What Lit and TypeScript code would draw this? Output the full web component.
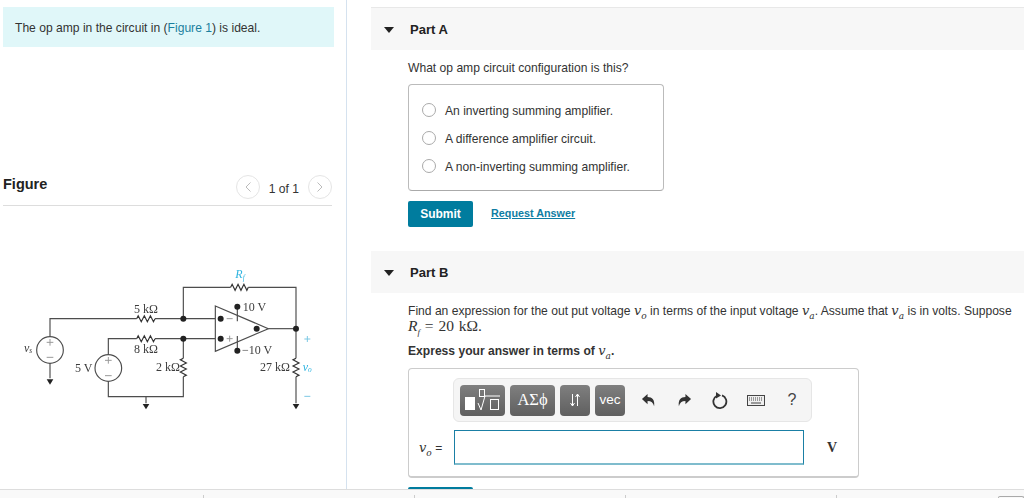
import { LitElement, css, html, svg } from "lit";
import { customElement } from "lit/decorators.js";

const zig = (x: number, y: number, w: number) => {
  const step = w / 6;
  let d = `M${x} ${y}`;
  for (let i = 0; i < 6; i++) {
    d += ` L${x + step * (i + 0.5)} ${y + (i % 2 ? 9 : -9)}`;
  }
  return `${d} L${x + w} ${y}`;
};

const zigV = (x: number, y: number, h: number) => {
  const step = h / 6;
  let d = `M${x} ${y}`;
  for (let i = 0; i < 6; i++) {
    d += ` L${x + (i % 2 ? 9 : -9)} ${y + step * (i + 0.5)}`;
  }
  return `${d} L${x} ${y + h}`;
};

const wires = [
  "M150 260V206H410",
  "M465 206H645",
  "M150 340V385",
  "M325 314V266H410",
  "M465 266H645",
  "M550 206V112H692",
  "M745 112H888V325",
  "M888 380V460",
  "M805 236H888",
  "M550 266V325",
  "M550 380V440H325V394",
  "M438 440V460",
  "M712 172V214",
  "M712 258V302",
];
const dots = [
  [550, 206], [550, 266], [662, 206], [662, 266], [770, 236],
  [888, 236], [712, 170], [712, 302],
];
const grounds = [[150, 388], [438, 462], [888, 462]];

const circuit = svg`
  <g fill="none" stroke="#4d4d4d" stroke-width="3.5">
    ${wires.map((d) => svg`<path d=${d} />`)}
    <path d="M646 168L805 236L646 304Z" />
    <circle cx="150" cy="300" r="40" />
    <circle cx="325" cy="354" r="40" />
  </g>
  <g fill="none" stroke="#333" stroke-width="3.5">
    <path d=${zig(410, 206, 55)} />
    <path d=${zig(410, 266, 55)} />
    <path d=${zig(692, 112, 53)} />
    <path d=${zigV(550, 325, 55)} />
    <path d=${zigV(888, 325, 55)} />
  </g>
  <g fill="#222">
    ${dots.map(([x, y]) => svg`<circle cx=${x} cy=${y} r="9" />`)}
    ${grounds.map(([x, y]) => svg`<path d="M${x - 10} ${y}H${x + 10}L${x} ${y + 16}Z" />`)}
  </g>
  <g stroke="#999" stroke-width="3" fill="none">
    <path d="M140 277H160M150 267V287M140 322H160" />
    <path d="M315 331H335M325 321V341M315 377H335" />
    <path d="M680 206H698M680 266H698M689 257V275" />
  </g>
  <g stroke="#7cc8e4" stroke-width="3" fill="none">
    <path d="M913 267H931M922 258V276M913 439H931" />
  </g>
  <g class="ctext">
    <text x="402" y="188">5 kΩ</text>
    <text x="402" y="310">8 kΩ</text>
    <text x="728" y="184">10 V</text>
    <text x="726" y="313">−10 V</text>
    <text x="225" y="365">5 V</text>
    <text x="468" y="362">2 kΩ</text>
    <text x="780" y="362">27 kΩ</text>
    <text x="72" y="305" class="it">v</text>
    <text x="88" y="310" class="sub">s</text>
  </g>
  <g class="ctext blue">
    <text x="706" y="84" class="it">R</text>
    <text x="728" y="90" class="sub">f</text>
    <text x="908" y="362" class="it">v</text>
    <text x="924" y="367" class="sub">o</text>
  </g>
`;

const replyPath = "M1 6.5L7 1V4.2C12 4.2 15 7.5 14 14C13 10.5 11 8.6 7 8.6V12Z";

@customElement("app-root")
export class AppRoot extends LitElement {
  static styles = css`
    :host {
      display: flex;
      flex-direction: column;
      width: 1024px;
      height: 498px;
      overflow: hidden;
      background: #fff;
      color: #333;
      font: 12.1px/14px "Liberation Sans", Arial, sans-serif;
    }

    .main {
      display: flex;
      height: 489px;
      overflow: hidden;
    }

    .left {
      flex: none;
      width: 346px;
      padding-top: 7px;
      border-right: 1px solid #d5e2ef;
    }

    .intro {
      display: flex;
      align-items: center;
      height: 40px;
      margin: 0 12px 0 3px;
      padding: 2px 12px 0;
      background: #e0f7f9;
      box-sizing: border-box;
    }

    a {
      color: #1a7f9e;
      text-decoration: none;
    }

    .fig-head {
      display: flex;
      align-items: center;
      justify-content: space-between;
      height: 31px;
      margin: 128px 14px 0 3px;
      border-bottom: 1px solid #ddd;
      box-sizing: border-box;
    }

    .fig-head h2 {
      margin: 0 0 13px;
      font-size: 14.5px;
      line-height: 18px;
      color: #222;
    }

    .pager {
      display: flex;
      align-items: center;
      gap: 9px;
      margin-bottom: 6px;
    }

    .pager span {
      display: flex;
      align-items: center;
      justify-content: center;
      width: 24px;
      height: 24px;
      border: 1px solid #e5e5e5;
      border-radius: 50%;
      box-sizing: border-box;
    }

    .count {
      padding-top: 3px;
    }

    .figure {
      display: block;
      margin-top: 44px;
      filter: blur(0.35px);
    }

    .ctext text {
      font: 36px "Liberation Serif", serif;
      fill: #3d3d3d;
    }

    .ctext.blue text {
      fill: #2fb4e0;
    }

    .ctext .it {
      font-style: italic;
    }

    .ctext .sub {
      font-size: 22px;
      font-style: italic;
    }

    .right {
      flex: 1;
      min-width: 0;
      margin-left: 24px;
      padding-top: 7px;
    }

    .part-head {
      display: flex;
      align-items: center;
      height: 42px;
      padding: 1px 0 0 13px;
      background: #f7f7f7;
      box-sizing: border-box;
      font-size: 13px;
      font-weight: bold;
      color: #222;
    }

    .part-a {
      height: 43px;
      border-top: 1px solid #e8e8e8;
    }

    .part-head svg {
      margin-right: 16px;
    }

    .part-b {
      margin-top: 24px;
    }

    .body {
      padding-left: 37px;
    }

    .question {
      margin: 11px 0 8px;
      line-height: 15px;
    }

    .choices {
      width: 256px;
      height: 107px;
      padding: 11px 0 0 13px;
      border: 1px solid #bbb;
      border-bottom-color: #aaa;
      border-radius: 4px;
      box-sizing: border-box;
    }

    .choice {
      display: flex;
      align-items: center;
      gap: 9px;
      height: 28px;
    }

    .choice-label {
      padding-top: 1px;
    }

    .radio {
      width: 14px;
      height: 14px;
      border: 1px solid #aaa;
      border-radius: 50%;
      box-sizing: border-box;
    }

    .actions {
      display: flex;
      align-items: center;
      gap: 18px;
      margin-top: 10px;
    }

    .submit {
      width: 65px;
      height: 26px;
      border-radius: 2px;
      background: #007c9e;
      color: #fff;
      font-size: 12px;
      font-weight: bold;
      text-align: center;
      line-height: 26px;
    }

    .request {
      margin-bottom: 2px;
      font-size: 10.8px;
      font-weight: bold;
      color: #0f7da3;
      text-decoration: underline;
    }

    .find {
      height: 28px;
      margin-top: 11px;
    }

    .v {
      font-family: "DejaVu Serif", serif;
      font-size: 13px;
      font-style: italic;
      font-weight: normal;
    }

    .v sub,
    .eq sub {
      font-size: 9px;
      line-height: 0;
    }

    .eq {
      display: inline-block;
      padding-top: 1px;
      font-family: "Liberation Serif", serif;
      font-size: 15.5px;
      line-height: 13px;
      word-spacing: 1px;
    }

    .express {
      height: 14px;
      margin-top: 12px;
      font-weight: bold;
    }

    .answer {
      width: 451px;
      height: 110px;
      margin-top: 10px;
      padding: 9px 0 0 44px;
      border: 1px solid #ccc;
      border-bottom: 2px solid #ccc;
      border-radius: 4px;
      box-sizing: border-box;
    }

    .toolbar {
      display: flex;
      align-items: center;
      width: 359px;
      height: 44px;
      padding-left: 6px;
      border: 1px solid #e6e6e6;
      border-radius: 6px;
      background: #f5f5f5;
      box-sizing: border-box;
    }

    .tbtn {
      display: flex;
      flex: none;
      align-items: center;
      justify-content: center;
      height: 31px;
      margin-right: 5px;
      border-radius: 4px;
      background: linear-gradient(#7f7f7f, #5f5f5f);
      color: #fff;
      box-sizing: border-box;
    }

    .w45 {
      width: 45px;
    }

    .w30 {
      width: 30px;
    }

    .greek {
      font: 16.5px "Liberation Serif", serif;
    }

    .vec {
      font-size: 13.5px;
    }

    .tool {
      display: flex;
      flex: none;
      align-items: center;
      justify-content: center;
      width: 36px;
      height: 31px;
      color: #444;
      font-size: 16px;
    }

    .answer-row {
      display: flex;
      align-items: center;
      margin: 8px 0 0 -44px;
      height: 35px;
    }

    .var {
      width: 45px;
      padding-left: 10px;
      box-sizing: border-box;
      white-space: nowrap;
    }

    .input {
      width: 350px;
      height: 35px;
      border: 1px solid #1a7fa5;
      border-bottom: 2px solid #7fbccd;
      box-sizing: border-box;
    }

    .unit {
      margin-left: 23px;
      font: bold 14px "Liberation Serif", serif;
    }

    .peek {
      width: 65px;
      height: 8px;
      margin-top: 9px;
      border-radius: 2px 2px 0 0;
      background: #007c9e;
    }

    .footer {
      display: grid;
      grid-template-columns: 204px 211px 211px 211px 161px 26px;
      height: 9px;
      border-top: 1px solid #ddd;
      background: #f9f9f9;
      box-sizing: border-box;
    }

    .footer div {
      margin-top: 5px;
      border-right: 1px solid #ccc;
    }

    .footer .end {
      margin-top: 6px;
      border: 1px solid #aaa;
      border-bottom: none;
      border-radius: 3px 3px 0 0;
    }
  `;

  render() {
    return html`
      <div class="main">
        <div class="left">
          <div class="intro">
            <span>The op amp in the circuit in (<a href="#">Figure 1</a>) is ideal.</span>
          </div>
          <div class="fig-head">
            <h2>Figure</h2>
            <div class="pager">
              <span>
                <svg width="8" height="12" viewBox="0 0 8 12" fill="none" stroke="#bbb">
                  <path d="M6.5 1.5L2 6l4.5 4.5" />
                </svg>
              </span>
              <div class="count">1 of 1</div>
              <span>
                <svg width="8" height="12" viewBox="0 0 8 12" fill="none" stroke="#bbb">
                  <path d="M1.5 1.5L6 6l-4.5 4.5" />
                </svg>
              </span>
            </div>
          </div>
          <svg class="figure" width="340" height="180" viewBox="0 0 1020 540">${circuit}</svg>
        </div>
        <div class="right">
          <div class="part-head part-a">
            <svg width="10" height="6" viewBox="0 0 10 6"><path d="M0 0H10L5 6Z" fill="#222" /></svg>
            Part A
          </div>
          <div class="body">
            <div class="question">What op amp circuit configuration is this?</div>
            <div class="choices">
              ${[
                "An inverting summing amplifier.",
                "A difference amplifier circuit.",
                "A non-inverting summing amplifier.",
              ].map(
                (c) => html`<div class="choice">
                  <span class="radio"></span><span class="choice-label">${c}</span>
                </div>`,
              )}
            </div>
            <div class="actions">
              <div class="submit">Submit</div>
              <a class="request" href="#">Request Answer</a>
            </div>
          </div>
          <div class="part-head part-b">
            <svg width="10" height="6" viewBox="0 0 10 6"><path d="M0 0H10L5 6Z" fill="#222" /></svg>
            Part B
          </div>
          <div class="body">
            <div class="find">
              Find an expression for the out put voltage
              <span class="v">v<sub>o</sub></span>
              in terms of the input voltage
              <span class="v">v<sub>a</sub></span>. Assume that
              <span class="v">v<sub>a</sub></span>
              is in volts. Suppose<br />
              <span class="eq"><i>R</i><sub><i>f</i></sub> = 20 kΩ.</span>
            </div>
            <div class="express">
              Express your answer in terms of
              <span class="v">v<sub>a</sub></span>.
            </div>
            <div class="answer">
              <div class="toolbar">
                <div class="tbtn w45">
                  <svg width="40" height="24" viewBox="0 0 40 24" fill="none" stroke="#fff">
                    <rect x="2" y="9" width="10" height="13" fill="#fff" stroke="none" />
                    <rect x="16.5" y="1.5" width="5" height="7" />
                    <path d="M15 15l3 7 4-14h15" />
                    <rect x="27.5" y="11.5" width="8" height="10" />
                  </svg>
                </div>
                <div class="tbtn w45 greek">ΑΣϕ</div>
                <div class="tbtn w30">
                  <svg width="12" height="14" viewBox="0 0 12 14" fill="none" stroke="#fff">
                    <path d="M3.5 1V13M1.5 10L3.5 13L5.5 10M8.5 13V1M6.5 4L8.5 1L10.5 4" />
                  </svg>
                </div>
                <div class="tbtn w30 vec">vec</div>
                <div class="tool">
                  <svg width="15" height="15" viewBox="0 0 16 16"><path d=${replyPath} fill="#333" /></svg>
                </div>
                <div class="tool">
                  <svg width="15" height="15" viewBox="0 0 16 16" style="transform: scaleX(-1)">
                    <path d=${replyPath} fill="#333" />
                  </svg>
                </div>
                <div class="tool">
                  <svg width="16" height="17" viewBox="0 0 16 17" fill="none" stroke="#333" stroke-width="1.8">
                    <path d="M5 3.7A6.5 6.5 0 1 0 10 3.4" />
                    <path d="M4 0L9 3.5L4 6.5Z" fill="#333" stroke="none" />
                  </svg>
                </div>
                <div class="tool">
                  <svg width="18" height="11" viewBox="0 0 18 11" fill="none" stroke="#444">
                    <rect x="0.5" y="0.5" width="17" height="10" fill="#eee" />
                    <path d="M2 3H16M2 5H16" stroke-dasharray="1 1" />
                    <path d="M4 8H14" />
                  </svg>
                </div>
                <div class="tool">?</div>
              </div>
              <div class="answer-row">
                <div class="var"><span class="v">v<sub>o</sub></span> =</div>
                <div class="input"></div>
                <div class="unit">V</div>
              </div>
            </div>
            <div class="peek"></div>
          </div>
        </div>
      </div>
      <div class="footer">
        <div></div>
        <div></div>
        <div></div>
        <div></div>
        <span></span>
        <div class="end"></div>
      </div>
    `;
  }
}
